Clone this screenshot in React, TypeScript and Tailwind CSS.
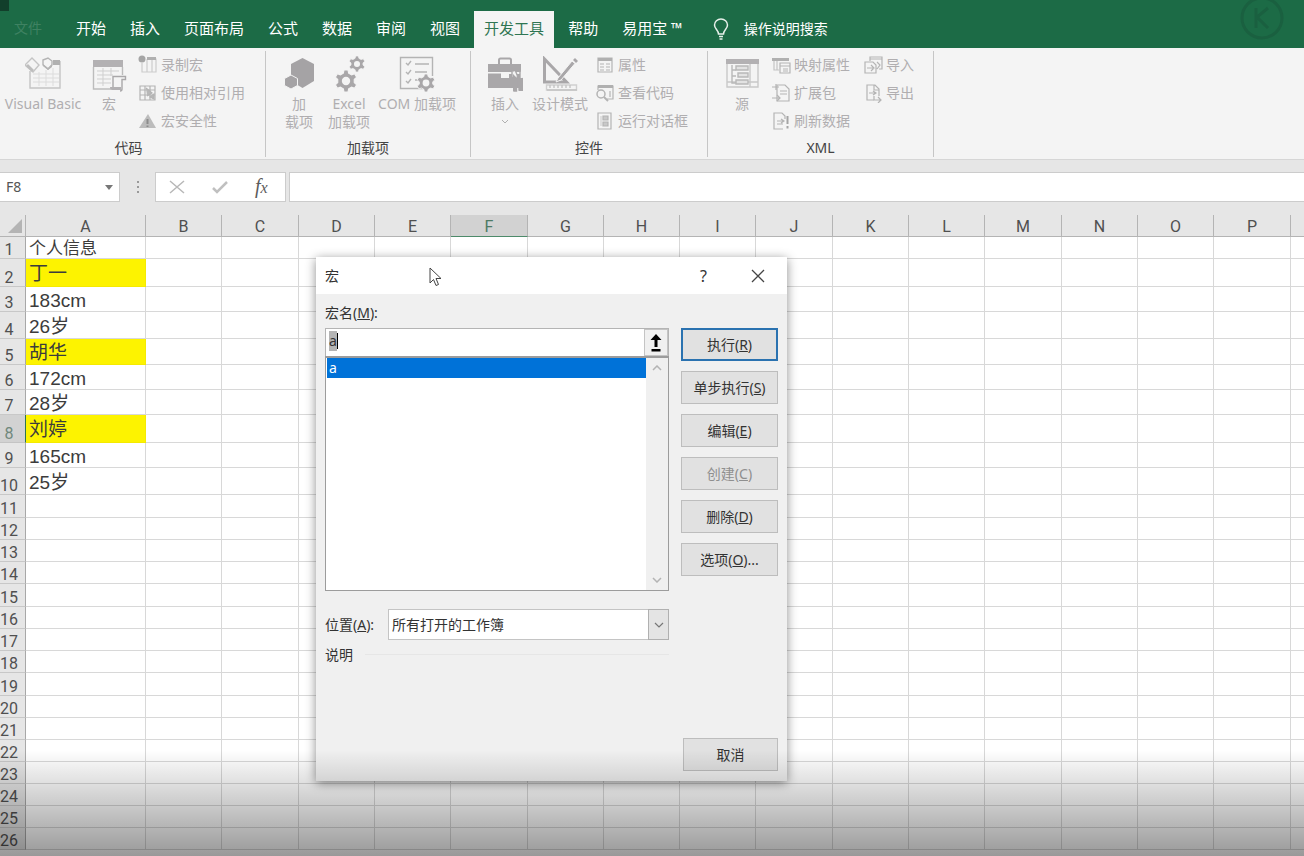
import React, { useState } from "react";

const TABS = ["开始", "插入", "页面布局", "公式", "数据", "审阅", "视图", "开发工具", "帮助", "易用宝 ™"];
const ACTIVE_TAB = "开发工具";

interface Column {
  name: string;
  width: string;
}

const COLUMNS: Column[] = [
  { name: "A", width: "w-[120px]" },
  { name: "B", width: "w-[76px]" },
  { name: "C", width: "w-[77px]" },
  { name: "D", width: "w-[76px]" },
  { name: "E", width: "w-[76px]" },
  { name: "F", width: "w-[77px]" },
  { name: "G", width: "w-[76px]" },
  { name: "H", width: "w-[76px]" },
  { name: "I", width: "w-[76px]" },
  { name: "J", width: "w-[77px]" },
  { name: "K", width: "w-[76px]" },
  { name: "L", width: "w-[76px]" },
  { name: "M", width: "w-[77px]" },
  { name: "N", width: "w-[76px]" },
  { name: "O", width: "w-[76px]" },
  { name: "P", width: "w-[77px]" },
  { name: "", width: "w-[76px]" },
];

interface Row {
  height: string;
  text?: string;
  marked?: boolean;
}

const FILLED_ROWS: Row[] = [
  { height: "h-[22px]", text: "个人信息" },
  { height: "h-[28px]", text: "丁一", marked: true },
  { height: "h-[25px]", text: "183cm" },
  { height: "h-[27px]", text: "26岁" },
  { height: "h-[26px]", text: "胡华", marked: true },
  { height: "h-[25px]", text: "172cm" },
  { height: "h-[25px]", text: "28岁" },
  { height: "h-[28px]", text: "刘婷", marked: true },
  { height: "h-[25px]", text: "165cm" },
  { height: "h-[27px]", text: "25岁" },
];

const EMPTY_ROWS: Row[] = Array.from({ length: 16 }, (_, i) => ({
  height: i === 0 || i === 4 || i === 8 ? "h-[23px]" : "h-[22px]",
}));

const ROWS = [...FILLED_ROWS, ...EMPTY_ROWS];

/* ---------- icons ---------- */

function BigIcon({ children }: { children: React.ReactNode }) {
  return (
    <svg viewBox="0 0 36 36" className="size-9 shrink-0" fill="none" stroke="#a9a7a9" strokeWidth="1.4">
      {children}
    </svg>
  );
}

function SmallIcon({ children }: { children: React.ReactNode }) {
  return (
    <svg viewBox="0 0 20 20" className="size-5 shrink-0" fill="none" stroke="#b4b4b4" strokeWidth="1.2">
      {children}
    </svg>
  );
}

function Gear({ x, y, scale }: { x: number; y: number; scale: number }) {
  return (
    <g transform={`translate(${x} ${y}) scale(${scale})`}>
      <path
        d="M-1.800-10h3.600l.6 2.900 2.700 1.500 2.800-.9 1.800 3.100-2.200 2v2.800l2.200 2-1.800 3.100-2.800-.9-2.700 1.500-.6 2.900h-3.600l-.6-2.900-2.700-1.500-2.800.9-1.800-3.100 2.200-2v-2.800l-2.200-2 1.800-3.100 2.800.9 2.700-1.500z"
        fill="#a9a7a9"
        stroke="#f4f4f4"
        strokeWidth="1"
      />
      <circle r="3.800" fill="#f4f4f4" stroke="none" />
    </g>
  );
}

const VisualBasicIcon = () => (
  <BigIcon>
    <path d="M5 15v17h30V5" stroke="#c4c4c4" />
    <path d="M8 18h26M8 22h26M8 26h26M14 16v14M21 14v16M28 12v18" stroke="#dcdcdc" strokeWidth="1" />
    <path d="M0 9l7-7 7 7-6 7z" fill="#f4f4f4" stroke="#c4c4c4" />
    <path d="M1 10l6 6 2-2-6-6z" fill="#bdbdbd" stroke="none" />
    <path d="M18 4l5-2 4 3v4l-4 4-5-4z" fill="#f4f4f4" stroke="#b4b4b4" />
    <path d="M18 8l5 4 4-4v3l-4 3-5-4z" fill="#b4b4b4" stroke="none" />
    <path d="M28 4h7v5h-7z" fill="#b0b0b0" stroke="none" />
  </BigIcon>
);

const MacroIcon = () => (
  <BigIcon>
    <path d="M2 4h30v7H2z" fill="#b3b1b3" stroke="none" />
    <path d="M2.500 11v22H20M31.500 11v8" stroke="#bcbcbc" />
    <path d="M6 15h22M6 19h16M6 23h14M6 27h14M12 12v18M20 12v8" stroke="#cfcfcf" strokeWidth="1" />
    <path d="M22 32V20.500h12.500v3H31V33c0 1.500-1 2-2 2" fill="#f4f4f4" />
    <path d="M19 31h11v3H21c-1.500 0-2-1.500-2-3z" fill="#b3b1b3" stroke="none" />
  </BigIcon>
);

const HexagonsIcon = () => (
  <BigIcon>
    <path d="M21.500 2L33 8v17l-11.500 7L10 25V8z" fill="#a5a3a5" stroke="none" />
    <path d="M10 19l6.500 3.500v7L10 33l-6.500-3.500v-7z" fill="#a5a3a5" stroke="#f4f4f4" strokeWidth="1" />
  </BigIcon>
);

const GearsIcon = () => (
  <BigIcon>
    <Gear x={26} y={8} scale={0.8} />
    <Gear x={15} y={25} scale={1.1} />
  </BigIcon>
);

const ComIcon = () => (
  <BigIcon>
    <path d="M24 32.500H1.500V1.500h32V20" stroke="#b4b4b4" />
    <path d="M7 7l2 2 3-4M7 16l2 2 3-4M7 25l2 2 3-4M16 8h14M16 16h12M16 24h3" stroke="#b4b4b4" />
    <Gear x={27} y={27} scale={0.9} />
  </BigIcon>
);

const ToolboxIcon = () => (
  <BigIcon>
    <path d="M12 8V4c0-1 .5-1.500 1.500-1.500h9c1 0 1.500.5 1.500 1.500v4" strokeWidth="2" />
    <path d="M1 8h33v8H1zM1 17.500h13V22h8v-4h12v14H1z" fill="#a9a7a9" stroke="none" />
    <path d="M25 16v5l2 2v12h2.500V23l1-3-2-5M33 15v8l-1 1v10h3V24l1-2" fill="#f4f4f4" />
    <path d="M26 18l3 3v14h-3zM32 22h4v13h-4z" fill="#a9a7a9" stroke="none" />
  </BigIcon>
);

const DesignIcon = () => (
  <BigIcon>
    <path d="M2.500 3v23h22z" strokeWidth="3" />
    <path d="M16 22L30 5l3 2.500L19 24l-5 2z" fill="#a9a7a9" stroke="#f4f4f4" strokeWidth="1" />
    <path d="M31 4l2-2 3 3-2 2z" fill="#a9a7a9" stroke="none" />
    <path d="M4.500 29h30v5h-30z" stroke="#d0d0d0" />
    <path d="M5 34h30M8 29v3M12 29v3M16 29v3M20 29v3M24 29v3M28 29v3" stroke="#c4c4c4" />
  </BigIcon>
);

const SourceIcon = () => (
  <BigIcon>
    <path d="M2 3h33v5H2z" fill="#b3b1b3" stroke="none" />
    <path d="M3 8v23h31V8M3 26h31M26 8v23" stroke="#c8c8c8" />
    <path d="M8 9v18h4M8 14h4M8 20h4" stroke="#b8b8b8" />
    <path d="M12 10h12v4H12zM14 17h10v4H14zM12 24h12v4H12z" fill="#e2e2e2" stroke="#b8b8b8" />
  </BigIcon>
);

const RecordIcon = () => (
  <SmallIcon>
    <path d="M4 8v9h14V4H9M9 4v13M14 4v13" stroke="#cccccc" />
    <path d="M9 2h9v3H9z" fill="#b0b0b0" stroke="none" />
    <circle cx="4" cy="4" r="3.500" fill="#a5a5a5" stroke="none" />
  </SmallIcon>
);

const RelativeIcon = () => (
  <SmallIcon>
    <path d="M2 3h15v14H2zM2 7h15M2 12h15M7 3v14M12 3v14" />
    <path d="M8 5l6 5-5 3M12 14l4-3v5z" fill="#b8b8b8" />
  </SmallIcon>
);

const WarningIcon = () => (
  <SmallIcon>
    <path d="M10 3l8 14H1z" fill="#bcbcbc" stroke="none" />
    <path d="M9.500 8v5M9.500 14.500v1.500" stroke="#8c8c8c" strokeWidth="2" />
  </SmallIcon>
);

const PropertiesIcon = () => (
  <SmallIcon>
    <path d="M3 3h14v14H3z" />
    <path d="M3 3h14v3H3z" fill="#b0b0b0" stroke="none" />
    <path d="M5 9h4M11 9h4M5 12h4M11 12h4M5 15h4M11 15h4" />
  </SmallIcon>
);

const ViewCodeIcon = () => (
  <SmallIcon>
    <path d="M3 7V3h15v13h-6" />
    <path d="M3 2h15v3H3z" fill="#b0b0b0" stroke="none" />
    <circle cx="6" cy="11" r="4" fill="#f4f4f4" strokeWidth="1.500" />
    <path d="M9 14l4 4" strokeWidth="2" />
    <path d="M15 8v6" />
  </SmallIcon>
);

const RunDialogIcon = () => (
  <SmallIcon>
    <path d="M3 2h13v16H3z" />
    <path d="M8 5h5v4H8zM8 11h5v4H8z" fill="#c8c8c8" />
    <path d="M6 15V5" stroke="#d0d0d0" />
  </SmallIcon>
);

const MapIcon = () => (
  <SmallIcon>
    <path d="M1 3h17v3H1z" fill="#b0b0b0" stroke="none" />
    <path d="M3 6v9h5M6 6v9" stroke="#c4c4c4" />
    <path d="M9 8h10v10H9zM9 11h10M12 14h5M12 16h5" />
  </SmallIcon>
);

const PackIcon = () => (
  <SmallIcon>
    <path d="M6 2h8l4 4v12H6z" />
    <path d="M1 4h7M5 1v6M9 8h7M9 11h7M1 15h8M6 12l3 3-3 3" />
  </SmallIcon>
);

const RefreshIcon = () => (
  <SmallIcon>
    <path d="M12 18H3V2h8l3 3v3M6 10h7M6 13h6M10 8l3 2-3 2" />
    <path d="M16.500 5v8M16.500 15v2.500" stroke="#a4a4a4" strokeWidth="2" />
  </SmallIcon>
);

const ImportIcon = () => (
  <SmallIcon>
    <path d="M7 6V2h12v12h-3M7 4h12" />
    <path d="M2 7h8l3 3v8H2zM4 13h6M8 10l3 3-3 3M14 7l3 3-3 4" />
  </SmallIcon>
);

const ExportIcon = () => (
  <SmallIcon>
    <path d="M11 17H4V2h8l4 4v7M11 2v5h5" />
    <path d="M6 10h6M10 8l3 2-3 2M11 13v4h7M15 14l3 3-3 3" />
  </SmallIcon>
);

/* ---------- ribbon ---------- */

interface BigButtonProps {
  icon: React.ReactNode;
  lines: string[];
  width: string;
  arrow?: boolean;
}

function BigButton({ icon, lines, width, arrow }: BigButtonProps) {
  return (
    <button className={`flex flex-col items-center pt-[5px] ${width}`}>
      {icon}
      <span className="mt-[3px] whitespace-nowrap leading-[18px]">
        {lines.map((line) => (
          <span key={line} className="block">
            {line}
          </span>
        ))}
      </span>
      {arrow && (
        <svg viewBox="0 0 8 6" className="mt-1.5 h-1.5 w-2" fill="none" stroke="#b0b0b0">
          <path d="M1 1l3 3 3-3" />
        </svg>
      )}
    </button>
  );
}

function SmallButton({ icon, label }: { icon: React.ReactNode; label: string }) {
  return (
    <button className="flex h-7 items-center gap-[3px] whitespace-nowrap leading-5">
      {icon}
      {label}
    </button>
  );
}

interface GroupProps {
  title: string;
  className: string;
  children: React.ReactNode;
}

function RibbonGroup({ title, className, children }: GroupProps) {
  return (
    <section className={`mt-[3px] mb-0.5 flex shrink-0 flex-col border-r border-[#c6c6c6] ${className}`}>
      <div className="flex flex-1 items-start text-[#b0aeb0]">{children}</div>
      <h2 className="h-[18px] text-center leading-[18px] text-[#444444]">{title}</h2>
    </section>
  );
}

function Ribbon() {
  return (
    <div className="flex h-28 shrink-0 overflow-hidden border-b border-[#d6d6d6] bg-[#f4f4f4] text-sm">
      <RibbonGroup title="代码" className="w-[266px] pr-2">
        <BigButton icon={<VisualBasicIcon />} lines={["Visual Basic"]} width="w-[86px]" />
        <BigButton icon={<MacroIcon />} lines={["宏"]} width="w-[46px]" />
        <div className="ml-1.5">
          <SmallButton icon={<RecordIcon />} label="录制宏" />
          <SmallButton icon={<RelativeIcon />} label="使用相对引用" />
          <SmallButton icon={<WarningIcon />} label="宏安全性" />
        </div>
      </RibbonGroup>
      <RibbonGroup title="加载项" className="w-[205px]">
        <BigButton icon={<HexagonsIcon />} lines={["加", "载项"]} width="ml-2 w-[50px]" />
        <BigButton icon={<GearsIcon />} lines={["Excel", "加载项"]} width="w-[50px]" />
        <BigButton icon={<ComIcon />} lines={["COM 加载项"]} width="w-[86px]" />
      </RibbonGroup>
      <RibbonGroup title="控件" className="w-[237px]">
        <BigButton icon={<ToolboxIcon />} lines={["插入"]} width="ml-3 w-[44px]" arrow />
        <BigButton icon={<DesignIcon />} lines={["设计模式"]} width="w-[66px]" />
        <div className="ml-0.5">
          <SmallButton icon={<PropertiesIcon />} label="属性" />
          <SmallButton icon={<ViewCodeIcon />} label="查看代码" />
          <SmallButton icon={<RunDialogIcon />} label="运行对话框" />
        </div>
      </RibbonGroup>
      <RibbonGroup title="XML" className="w-[226px]">
        <BigButton icon={<SourceIcon />} lines={["源"]} width="ml-3 w-[44px]" />
        <div className="ml-[7px]">
          <SmallButton icon={<MapIcon />} label="映射属性" />
          <SmallButton icon={<PackIcon />} label="扩展包" />
          <SmallButton icon={<RefreshIcon />} label="刷新数据" />
        </div>
        <div className="ml-[13px]">
          <SmallButton icon={<ImportIcon />} label="导入" />
          <SmallButton icon={<ExportIcon />} label="导出" />
        </div>
      </RibbonGroup>
    </div>
  );
}

function TitleBar() {
  return (
    <header className="relative flex h-12 shrink-0 items-end overflow-hidden bg-[#1c6b46] text-white">
      <div className="absolute left-0 top-0 h-[11px] w-[9px] bg-[#123f2b]" />
      <button className="h-[37px] w-[64px] pb-1 pr-2 text-sm text-[#3f8262]">文件</button>
      <nav className="flex">
        {TABS.map((tab) => (
          <button
            key={tab}
            className={`h-[37px] whitespace-nowrap pb-1 text-[15px] leading-5 ${
              tab === ACTIVE_TAB ? "mx-0.5 bg-[#f4f4f4] px-[10px] text-[#2f7552]" : "px-3"
            }`}
          >
            {tab}
          </button>
        ))}
      </nav>
      <button className="ml-[17px] flex h-[37px] items-center gap-3.5 whitespace-nowrap pb-0.5 text-sm">
        <svg viewBox="0 0 18 22" className="h-[22px] w-[18px]" fill="none" stroke="#e6f0ea" strokeWidth="1.500">
          <path d="M6.500 16c0-4-4-5-4-9a6.500 6 0 0 1 13 0c0 4-4 5-4 9zM7 18.500h4M7.500 21h3" />
        </svg>
        操作说明搜索
      </button>
      <svg
        viewBox="0 0 44 44"
        className="absolute right-5 -top-1 size-11"
        fill="none"
        stroke="#1a6040"
        strokeWidth="3"
      >
        <circle cx="22" cy="22" r="20" />
        <path d="M16 12v20M28 12L17 21l11 11" />
      </svg>
    </header>
  );
}

function FormulaBar() {
  return (
    <div className="flex shrink-0 items-center bg-[#e6e6e6] pb-[13px] pt-3">
      <div className="flex h-[30px] w-[120px] items-center border border-l-0 border-[#cccccc] bg-white pr-1.5">
        <input
          aria-label="名称框"
          defaultValue="F8"
          className="w-full min-w-0 bg-transparent pl-1.5 text-sm text-[#555555] outline-none"
        />
        <svg viewBox="0 0 8 5" className="h-[5px] w-2 shrink-0" fill="#777777">
          <path d="M0 0h8L4 5z" />
        </svg>
      </div>
      <div className="flex w-[35px] flex-col items-center gap-[3px]">
        <span className="size-0.5 bg-[#999999]" />
        <span className="size-0.5 bg-[#999999]" />
        <span className="size-0.5 bg-[#999999]" />
      </div>
      <div className="flex h-[30px] w-[131px] items-center justify-around border border-[#cccccc] bg-white pr-1">
        <button aria-label="取消输入">
          <svg viewBox="0 0 16 16" className="size-4" fill="none" stroke="#b8b8b8" strokeWidth="1.500">
            <path d="M1 2l14 12M15 2L1 14" />
          </svg>
        </button>
        <button aria-label="确认输入">
          <svg viewBox="0 0 16 16" className="size-4" fill="none" stroke="#c0c0c0" strokeWidth="2.500">
            <path d="M1 9l4 4L15 3" />
          </svg>
        </button>
        <button className="font-['Liberation_Serif',serif] text-xl italic leading-6 text-[#5c5c5c]">
          f<span className="text-base">x</span>
        </button>
      </div>
      <input
        aria-label="编辑栏"
        className="ml-[3px] h-[30px] min-w-0 flex-1 border border-r-0 border-[#cccccc] bg-white px-2 text-sm outline-none"
      />
    </div>
  );
}

/* ---------- sheet ---------- */

function Sheet() {
  return (
    <div className="min-h-0 flex-1 overflow-hidden bg-white">
      <table className="w-max table-fixed border-separate border-spacing-0 font-['Liberation_Sans','Noto_Sans_CJK_SC',sans-serif]">
        <thead className="font-['Roboto','Noto_Sans_CJK_SC',sans-serif] text-base leading-[18px] text-[#505050]">
          <tr className="h-[22px] bg-[#e6e6e6]">
            <th className="w-[26px] border-b border-r border-[#b4b4b4] p-0" aria-label="全选">
              <svg viewBox="0 0 14 14" className="ml-auto mr-[3px] size-3.5" fill="#b4b4b4">
                <path d="M14 0v14H0z" />
              </svg>
            </th>
            {COLUMNS.map((col) => (
              <th
                key={col.name || "next"}
                className={`border-b border-r p-0 pt-[3px] font-normal ${col.width} ${
                  col.name === "F"
                    ? "border-b-[#4d8a6a] border-r-[#b4b4b4] bg-[#d2d2d2] text-[#4d7a64]"
                    : "border-[#b4b4b4]"
                }`}
              >
                {col.name}
              </th>
            ))}
          </tr>
        </thead>
        <tbody>
          {ROWS.map((row, i) => (
            <tr key={i} className={row.height}>
              <th
                className={`border-b border-r p-0 pr-[7px] text-center align-bottom font-['Roboto',sans-serif] text-base font-normal leading-[17px] ${
                  i === 7
                    ? "border-b-[#c4c4c4] border-r-[#2f7552] bg-[#d2d2d2] text-[#70887c]"
                    : "border-b-[#c8c8c8] border-r-[#a8a8a8] bg-[#e6e6e6] text-[#505050]"
                }`}
              >
                {i + 1}
              </th>
              {COLUMNS.map((col) => (
                <td
                  key={col.name || "next"}
                  className={`whitespace-nowrap border-b border-r p-0 align-middle text-[#3c3c3c] ${
                    i === 0 ? "text-[17px] leading-[18px]" : "text-[19px] leading-[18px]"
                  } ${
                    col.name === "A" && row.marked ? "border-[#f5ea00] bg-[#fdf300]" : "border-[#d8d8d8]"
                  }`}
                >
                  {col.name === "A" && row.text && <span className="block pl-[3px] pt-[3px]">{row.text}</span>}
                </td>
              ))}
            </tr>
          ))}
        </tbody>
      </table>
    </div>
  );
}

/* ---------- macro dialog ---------- */

interface DialogButtonProps {
  label: string;
  hotkey?: string;
  suffix?: string;
  primary?: boolean;
  disabled?: boolean;
}

const ACTIONS: DialogButtonProps[] = [
  { label: "执行", hotkey: "R", primary: true },
  { label: "单步执行", hotkey: "S" },
  { label: "编辑", hotkey: "E" },
  { label: "创建", hotkey: "C", disabled: true },
  { label: "删除", hotkey: "D" },
  { label: "选项", hotkey: "O", suffix: "..." },
];

function DialogButton({ label, hotkey, suffix, primary, disabled }: DialogButtonProps) {
  return (
    <button
      disabled={disabled}
      className={`h-[33px] w-full whitespace-nowrap bg-[#e1e1e1] leading-5 disabled:text-[#8f8f8f] ${
        primary ? "border-2 border-[#2a72b0]" : "border border-[#bdbdbd]"
      }`}
    >
      {label}
      {hotkey && (
        <>
          (<u>{hotkey}</u>)
        </>
      )}
      {suffix}
    </button>
  );
}

function MacroDialog() {
  const [macroName, setMacroName] = useState("a");

  return (
    <div
      role="dialog"
      aria-label="宏"
      className="absolute left-[316px] top-[257px] w-[471px] bg-[#f0f0f0] text-sm text-[#333333] shadow-[0_2px_10px_rgba(0,0,0,0.45)]"
    >
      <div className="flex h-[37px] items-center bg-white pl-[9px] pr-[22px]">
        <span className="flex-1">宏</span>
        <button aria-label="帮助" className="mr-11 text-base leading-5">
          ?
        </button>
        <button aria-label="关闭">
          <svg viewBox="0 0 14 14" className="size-3.5" fill="none" stroke="#444444" strokeWidth="1.300">
            <path d="M1 1l12 12M13 1L1 13" />
          </svg>
        </button>
      </div>
      <div className="flex gap-3 px-[9px] pb-[10px] pt-[9px]">
        <div className="min-w-0 flex-1">
          <label htmlFor="macro-name" className="mb-[5px] block leading-5">
            宏名(<u>M</u>):
          </label>
          <div className="relative flex h-7 border border-b-0 border-[#b4b4b4] bg-white">
            <input
              id="macro-name"
              autoFocus
              value={macroName}
              onChange={(e) => setMacroName(e.target.value)}
              onFocus={(e) => e.target.select()}
              className="min-w-0 flex-1 bg-transparent pb-1 pl-[3px] outline-none selection:bg-[#b4b4b4] selection:text-[#333333]"
            />
            <span className="absolute left-[11px] top-1 h-4 w-px bg-black" />
            <button
              aria-label="引用"
              className="flex w-6 items-center justify-center border border-[#c4c4c4] bg-[#f0f0f0]"
            >
              <svg viewBox="0 0 12 18" className="h-[18px] w-3" fill="#000000">
                <path d="M6 0l5.500 6H7.500v7h-3V6H.5zM1.500 15h9v2.500h-9z" />
              </svg>
            </button>
          </div>
          <div className="flex h-[235px] border border-t-2 border-[#9c9c9c] bg-white">
            <ul role="listbox" aria-label="宏列表" className="flex-1 pl-px">
              <li role="option" aria-selected="true" className="h-5 bg-[#0072d8] pl-0.5 leading-5 text-white">
                a
              </li>
            </ul>
            <div className="flex w-[22px] flex-col items-center justify-between bg-[#f0f0f0] py-[7px]">
              <svg viewBox="0 0 10 6" className="h-1.5 w-2.5" fill="none" stroke="#b4b4b4" strokeWidth="1.500">
                <path d="M1 5l4-4 4 4" />
              </svg>
              <svg viewBox="0 0 10 6" className="h-1.5 w-2.5" fill="none" stroke="#b4b4b4" strokeWidth="1.500">
                <path d="M1 1l4 4 4-4" />
              </svg>
            </div>
          </div>
          <div className="mt-[18px] flex items-center">
            <label htmlFor="macro-location" className="w-[63px]">
              位置(<u>A</u>):
            </label>
            <div className="relative flex-1">
              <select
                id="macro-location"
                className="block h-[31px] w-full appearance-none border border-[#c4c4c4] bg-white pl-[3px] outline-none"
              >
                <option>所有打开的工作簿</option>
              </select>
              <span className="pointer-events-none absolute inset-y-0 right-0 flex w-[21px] items-center justify-center border border-[#b0b0b0] bg-[#e4e4e4]">
                <svg viewBox="0 0 10 6" className="h-1.5 w-2.5" fill="none" stroke="#777777" strokeWidth="1.200">
                  <path d="M1 1l4 4 4-4" />
                </svg>
              </span>
            </div>
          </div>
          <div className="mt-[5px] flex h-[126px] items-start gap-3">
            <span className="leading-5">说明</span>
            <span className="mt-[9px] h-px flex-1 bg-[#e6e6e6]" />
          </div>
        </div>
        <div className="flex w-[97px] flex-col gap-[10px] pt-[25px]">
          {ACTIONS.map((action) => (
            <DialogButton key={action.label} {...action} />
          ))}
          <div className="mt-auto pl-0.5">
            <DialogButton label="取消" />
          </div>
        </div>
      </div>
    </div>
  );
}

export default function App() {
  return (
    <div className="relative flex h-screen flex-col overflow-hidden bg-[#e6e6e6] font-['Noto_Sans','Noto_Sans_CJK_SC',sans-serif]">
      <TitleBar />
      <Ribbon />
      <FormulaBar />
      <Sheet />
      <MacroDialog />
      {/* mouse pointer */}
      <svg
        viewBox="0 0 13 20"
        className="absolute left-[429px] top-[267px] h-5 w-[13px]"
        fill="#ffffff"
        stroke="#444444"
      >
        <path d="M1 1v15l3.500-3.500L7 18.500l2.500-1L7 11.500h5z" />
      </svg>
      {/* player shade along the bottom edge */}
      <div className="pointer-events-none absolute inset-x-0 bottom-0 h-[106px] bg-linear-to-t from-black/40 to-transparent" />
    </div>
  );
}
